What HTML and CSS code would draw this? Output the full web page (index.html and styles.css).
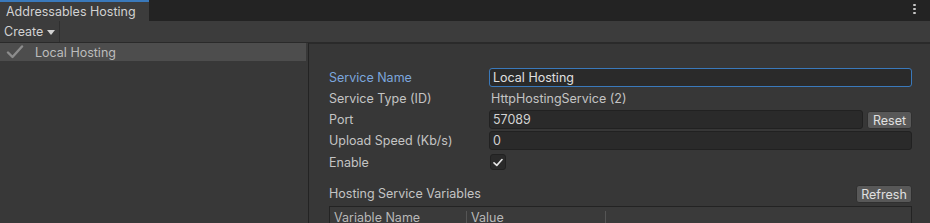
FILE: index.html
```html
<!DOCTYPE html>
<html>
<head>
<meta charset="utf-8">
<link rel="stylesheet" href="styles.css">
</head>
<body>
<div class="window">
  <div class="tabbar">
    <div class="tab">Addressables Hosting</div>
    <div class="spacer"></div>
    <div class="menu"><span></span><span></span><span></span></div>
  </div>
  <div class="toolbar">
    <div class="create">Create <span class="caret"></span></div>
  </div>
  <div class="main">
    <div class="list">
      <div class="item selected">
        <svg class="check" width="18" height="14" viewBox="0 0 18 14"><path d="M2 7.5 L6.5 12 L16 1.5" fill="none" stroke="#8c8c8c" stroke-width="2.4" stroke-linecap="round" stroke-linejoin="round"/></svg>
        <span>Local Hosting</span>
      </div>
    </div>
    <div class="splitter"></div>
    <div class="panel">
      <div class="row">
        <div class="label focused">Service Name</div>
        <div class="field focus">Local Hosting</div>
      </div>
      <div class="row">
        <div class="label">Service Type (ID)</div>
        <div class="value">HttpHostingService (2)</div>
      </div>
      <div class="row">
        <div class="label">Port</div>
        <div class="field">57089</div>
        <div class="btn reset">Reset</div>
      </div>
      <div class="row">
        <div class="label">Upload Speed (Kb/s)</div>
        <div class="field">0</div>
      </div>
      <div class="row">
        <div class="label">Enable</div>
        <div class="checkbox">
          <svg width="10" height="9" viewBox="0 0 10 9"><path d="M1 4.8 L3.8 7.4 L9 1.5" fill="none" stroke="#e6e6e6" stroke-width="1.6" stroke-linecap="round" stroke-linejoin="round"/></svg>
        </div>
      </div>
      <div class="vars-head">
        <div class="vars-title">Hosting Service Variables</div>
        <div class="btn refresh">Refresh</div>
      </div>
      <div class="table">
        <div class="th col1">Variable Name</div>
        <div class="th col2">Value</div>
        <div class="th col3"></div>
      </div>
    </div>
  </div>
</div>
</body>
</html>
```
FILE: styles.css
```css
html, body {
  margin: 0;
  padding: 0;
}
body {
  width: 930px;
  height: 223px;
  overflow: hidden;
  background: #383838;
  font-family: Inter, "Noto Sans", sans-serif;
  font-size: 12px;
  color: #c4c4c4;
}
.window {
  display: flex;
  flex-direction: column;
  height: 223px;
}
.tabbar {
  display: flex;
  height: 21px;
  background: #1f1f1f;
}
.tab {
  width: 143px;
  padding-left: 6px;
  background: #3c3c3c;
  border-top: 2px solid #3a79bb;
  color: #d2d2d2;
  font-size: 12.5px;
  line-height: 19px;
  white-space: nowrap;
}
.spacer {
  flex: 1;
  background: #232323;
}
.menu {
  width: 30px;
  background: #232323;
  display: flex;
  flex-direction: column;
  align-items: center;
  padding-top: 4px;
  gap: 2px;
  box-sizing: border-box;
}
.menu span {
  width: 3px;
  height: 2px;
  background: #c8c8c8;
  border-radius: 1px;
  margin-left: -1px;
}
.toolbar {
  display: flex;
  height: 21px;
  background: #3c3c3c;
  border-bottom: 1px solid #2a2a2a;
}
.create {
  display: flex;
  align-items: center;
  gap: 4px;
  padding: 1px 4px 0 4px;
  width: 51px;
  border-right: 1px solid #2f2f2f;
  font-size: 12.5px;
  color: #d2d2d2;
  line-height: 20px;
}
.caret {
  width: 0;
  height: 0;
  border-left: 4px solid transparent;
  border-right: 4px solid transparent;
  border-top: 5px solid #d2d2d2;
  margin-top: 1px;
}
.main {
  flex: 1;
  display: flex;
}
.list {
  width: 307px;
  background: #383838;
}
.item {
  display: flex;
  align-items: center;
  height: 18px;
  gap: 11px;
  padding-left: 6px;
  font-size: 12.5px;
  color: #bcbcbc;
}
.item.selected {
  background: #4d4d4d;
  width: 300px;
}
.splitter {
  width: 1px;
  background: #232323;
  margin-left: 1px;
}
.panel {
  flex: 1;
  border-top: 1px solid #2a2a2a;
  padding: 23px 18px 0 20px;
  display: flex;
  flex-direction: column;
  background: #373737;
}
.row {
  display: flex;
  align-items: center;
  height: 21px;
}
.row:nth-child(4),
.row:nth-child(5) {
  height: 21.5px;
}
.label {
  width: 160px;
  flex: none;
  font-size: 12.5px;
  color: #c4c4c4;
}
.label.focused {
  color: #7ca6dc;
}
.value {
  padding-left: 2px;
  font-size: 12.5px;
}
.field {
  flex: 1;
  height: 17px;
  line-height: 17px;
  background: #2a2a2a;
  border: 1px solid #212121;
  border-radius: 3px;
  padding-left: 3px;
  font-size: 12.5px;
  color: #d2d2d2;
}
.field.focus {
  border-color: #3a79bb;
  color: #e0e0e0;
}
.btn {
  height: 18px;
  line-height: 18px;
  background: #585858;
  border: 1px solid #303030;
  border-radius: 3px;
  color: #e0e0e0;
  font-size: 12.5px;
  text-align: center;
  box-sizing: border-box;
}
.reset {
  width: 45px;
  margin-left: 4px;
}
.checkbox {
  width: 14px;
  height: 14px;
  background: #2a2a2a;
  border: 1px solid #212121;
  border-radius: 3px;
  display: flex;
  align-items: center;
  justify-content: center;
  margin-left: 1px;
}
.vars-head {
  display: flex;
  align-items: center;
  justify-content: space-between;
  margin-top: 11px;
  height: 19px;
}
.vars-title {
  font-size: 12.5px;
}
.refresh {
  width: 56px;
}
.table {
  display: flex;
  margin-top: 3px;
  height: 20px;
  border: 1px solid #232323;
  border-bottom: none;
  background: #3a3a3a;
}
.th {
  font-size: 12.5px;
  color: #b8b8b8;
  padding-left: 4px;
  border-right: 1px solid #555;
  height: 14px;
  line-height: 14px;
  margin-top: 4px;
}
.col1 {
  width: 132px;
}
.col2 {
  width: 134px;
}
.col3 {
  flex: 1;
  border-right: none;
}
```
